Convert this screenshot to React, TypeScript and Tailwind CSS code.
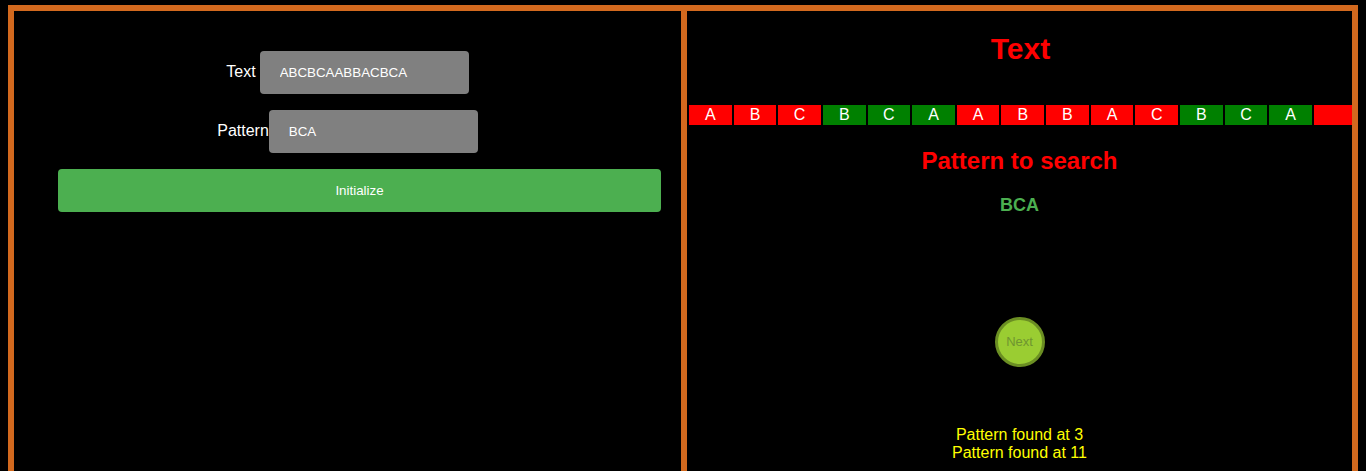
const text = "ABCBCAABBACBCA";
const matches = [3, 11];
const pattern = "BCA";

function isMatched(i: number) {
  return matches.some((m) => i >= m && i < m + pattern.length);
}

export default function App() {
  return (
    <div
      className="min-h-screen bg-black pt-[5px] px-[8px]"
      style={{ fontFamily: '"Liberation Sans", Arial, sans-serif' }}
    >
      <div className="flex h-[480px] border-[6px] border-[#d2691e]">
        {/* left: inputs */}
        <div className="w-[667px] flex flex-col items-center pt-[40px] gap-[16px]">
          <div className="flex items-center">
            <span className="text-white text-[16px] -mt-[2px]">Text</span>
            <input
              readOnly
              value={text}
              className="ml-[4px] w-[209px] h-[43px] rounded-[4px] bg-[#808080] pl-[20px] text-white text-[13.33px] outline-none"
            />
          </div>
          <div className="flex items-center">
            <span className="text-white text-[16px] -mt-[2px]">Pattern</span>
            <input
              readOnly
              value={pattern}
              className="w-[209px] h-[43px] rounded-[4px] bg-[#808080] pl-[20px] text-white text-[13.33px] outline-none"
            />
          </div>
          <button className="self-stretch ml-[44px] mr-[20px] h-[43px] rounded-[4px] bg-[#4caf50] text-white text-[13.33px]">
            Initialize
          </button>
        </div>

        <div className="w-[6px] bg-[#d2691e]" />

        {/* right: visualisation */}
        <div className="flex-1 flex flex-col items-center">
          <h1 className="shrink-0 mt-[21px] ml-[2px] text-[30px] font-bold leading-[normal] text-[#ff0000]">
            Text
          </h1>
          <div className="shrink-0 self-stretch flex gap-[2px] pl-[2px] mt-[39px]">
            {text.split("").map((ch, i) => (
              <div
                key={i}
                className={
                  "flex-1 h-[20px] flex items-center justify-center text-white text-[16px] leading-none " +
                  (isMatched(i) ? "bg-[#008000]" : "bg-[#ff0000]")
                }
              >
                {ch}
              </div>
            ))}
            <div className="w-[38px] h-[20px] bg-[#ff0000]" />
          </div>
          <h2 className="shrink-0 mt-[22px] text-[24px] font-bold leading-[normal] text-[#ff0000]">
            Pattern to search
          </h2>
          <h3 className="shrink-0 mt-[20px] text-[18px] font-bold leading-[normal] text-[#4caf50]">
            {pattern}
          </h3>
          <button className="shrink-0 mt-[101px] w-[50px] h-[50px] rounded-full border-[3px] border-[#6b8e23] bg-[#9acd32] text-[13px] text-[#6f9530] flex items-center justify-center">
            Next
          </button>
          <div className="shrink-0 mt-[59px] flex flex-col items-center text-[16px] leading-[normal] text-[#ffff00]">
            {matches.map((m) => (
              <div key={m}>Pattern found at {m}</div>
            ))}
          </div>
        </div>
      </div>
    </div>
  );
}
